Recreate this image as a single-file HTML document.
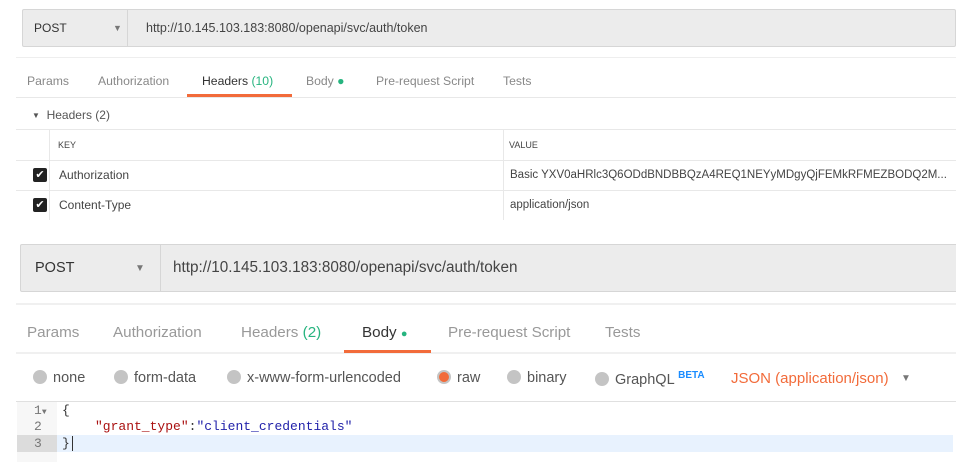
<!DOCTYPE html>
<html><head><style>
*{margin:0;padding:0;box-sizing:border-box}
body{width:956px;height:464px;background:#fff;font-family:"Liberation Sans",sans-serif;position:relative;overflow:hidden;color:#505050}
.a{position:absolute;white-space:nowrap}
.box{position:absolute;background:#ececec;border:1px solid #d6d6d6;border-radius:2px}
.cb{position:absolute;width:14px;height:14px;background:#222;border-radius:2px;color:#fff;font-size:11px;line-height:14px;text-align:center}
.rad{display:inline-block;width:14px;height:14px;border-radius:50%;background:#c4c4c4;vertical-align:-2px;margin-right:6px}
.m{font-family:'Liberation Mono',monospace;font-size:13px}
</style></head><body>
<!-- top -->
<div class="box" style="left:22px;top:9px;width:934px;height:38px"></div>
<div class="a" style="left:127px;top:10px;width:1px;height:36px;background:#d6d6d6"></div>
<div class="a" style="left:34px;top:21px;font-size:12px;color:#333">POST</div>
<div class="a" style="left:113px;top:23px;font-size:9px;color:#777">▼</div>
<div class="a" style="left:146px;top:21px;font-size:12.5px;color:#444">http://10.145.103.183:8080/openapi/svc/auth/token</div>
<div class="a" style="left:16px;top:57px;width:940px;height:1px;background:#eee"></div>
<div class="a" style="left:16px;top:97px;width:940px;height:1px;background:#e8e8e8"></div>
<div class="a" style="left:27px;top:74px;font-size:12.2px;color:#888">Params</div>
<div class="a" style="left:98px;top:74px;font-size:12.2px;color:#888">Authorization</div>
<div class="a" style="left:202px;top:74px;font-size:12.2px;color:#333">Headers <span style="color:#26b47f">(10)</span></div>
<div class="a" style="left:187px;top:94px;width:105px;height:3px;background:#f26b3a"></div>
<div class="a" style="left:306px;top:74px;font-size:12.2px;color:#888">Body <span style="color:#26b47f">●</span></div>
<div class="a" style="left:376px;top:74px;font-size:12.2px;color:#888">Pre-request Script</div>
<div class="a" style="left:503px;top:74px;font-size:12.2px;color:#888">Tests</div>
<div class="a" style="left:32px;top:108px;font-size:12px;color:#555"><span style="font-size:8px;vertical-align:1px">▼</span>&nbsp; Headers (2)</div>
<div class="a" style="left:16px;top:129px;width:940px;height:1px;background:#e8e8e8"></div>
<div class="a" style="left:16px;top:160px;width:940px;height:1px;background:#e8e8e8"></div>
<div class="a" style="left:16px;top:190px;width:940px;height:1px;background:#e8e8e8"></div>
<div class="a" style="left:49px;top:130px;width:1px;height:90px;background:#e8e8e8"></div>
<div class="a" style="left:503px;top:130px;width:1px;height:90px;background:#e8e8e8"></div>
<div class="a" style="left:58px;top:140px;font-size:9px;color:#444">KEY</div>
<div class="a" style="left:509px;top:140px;font-size:9px;color:#444">VALUE</div>
<div class="cb" style="left:33px;top:168px">✔</div>
<div class="cb" style="left:33px;top:198px">✔</div>
<div class="a" style="left:59px;top:168px;font-size:12px;color:#444">Authorization</div>
<div class="a" style="left:59px;top:198px;font-size:12px;color:#444">Content-Type</div>
<div class="a" style="left:510px;top:168px;font-size:11.5px;color:#444;line-height:14px">Basic YXV0aHRlc3Q6ODdBNDBBQzA4REQ1NEYyMDgyQjFEMkRFMEZBODQ2M...</div>
<div class="a" style="left:510px;top:198px;font-size:11.5px;color:#444;line-height:14px">application/json</div>
<!-- bottom -->
<div class="box" style="left:20px;top:244px;width:940px;height:48px"></div>
<div class="a" style="left:160px;top:245px;width:1px;height:46px;background:#d6d6d6"></div>
<div class="a" style="left:35px;top:260px;font-size:14.5px;color:#333">POST</div>
<div class="a" style="left:135px;top:263px;font-size:10px;color:#777">▼</div>
<div class="a" style="left:173px;top:259px;font-size:15.3px;color:#444">http://10.145.103.183:8080/openapi/svc/auth/token</div>
<div class="a" style="left:16px;top:303px;width:940px;height:2px;background:#f0f0f0"></div>
<div class="a" style="left:16px;top:352px;width:940px;height:2px;background:#f0f0f0"></div>
<div class="a" style="left:27px;top:324px;font-size:15.2px;color:#999">Params</div>
<div class="a" style="left:113px;top:324px;font-size:15.2px;color:#999">Authorization</div>
<div class="a" style="left:241px;top:324px;font-size:15.2px;color:#999">Headers <span style="color:#26b47f">(2)</span></div>
<div class="a" style="left:362px;top:324px;font-size:15.2px;color:#333">Body <span style="color:#26b47f;font-size:11px">●</span></div>
<div class="a" style="left:344px;top:350px;width:87px;height:3px;background:#f26b3a"></div>
<div class="a" style="left:448px;top:324px;font-size:15.2px;color:#999">Pre-request Script</div>
<div class="a" style="left:605px;top:324px;font-size:15.2px;color:#999">Tests</div>
<div class="a" style="left:33px;top:370px;font-size:14.5px;color:#555"><span class="rad"></span>none</div>
<div class="a" style="left:114px;top:370px;font-size:14.5px;color:#555"><span class="rad"></span>form-data</div>
<div class="a" style="left:227px;top:370px;font-size:14.5px;color:#555"><span class="rad"></span>x-www-form-urlencoded</div>
<div class="a" style="left:437px;top:370px;font-size:14.5px;color:#555"><span class="rad" style="background:#f26b3a;border:2px solid #c4c4c4"></span>raw</div>
<div class="a" style="left:507px;top:370px;font-size:14.5px;color:#555"><span class="rad"></span>binary</div>
<div class="a" style="left:595px;top:370px;font-size:14.5px;color:#555"><span class="rad"></span>GraphQL <sup style="color:#1a8cff;font-size:10px;font-weight:bold;vertical-align:6px">BETA</sup></div>
<div class="a" style="left:731px;top:370px;font-size:15px;color:#f26b3a">JSON (application/json)</div>
<div class="a" style="left:901px;top:373px;font-size:10px;color:#777">▼</div>
<div class="a" style="left:16px;top:401px;width:940px;height:1px;background:#e0e0e0"></div>
<div class="a" style="left:17px;top:402px;width:40px;height:60px;background:#f7f7f7"></div>
<div class="a" style="left:57px;top:435px;width:896px;height:17px;background:#e8f2fe"></div>
<div class="a" style="left:17px;top:435px;width:40px;height:17px;background:#dcdcdc"></div>
<div class="a m" style="left:34px;top:403px;color:#777">1<span style="font-size:8px">▼</span></div>
<div class="a m" style="left:34px;top:419px;color:#777">2</div>
<div class="a m" style="left:34px;top:436px;color:#777">3</div>
<div class="a m" style="left:62px;top:403px;color:#333">{</div>
<div class="a m" style="left:95px;top:419px;color:#333"><span style="color:#a11">"grant_type"</span>:<span style="color:#22a">"client_credentials"</span></div>
<div class="a m" style="left:62px;top:436px;color:#333">}</div>
<div class="a" style="left:72px;top:436px;width:1px;height:15px;background:#333"></div>
</body></html>
